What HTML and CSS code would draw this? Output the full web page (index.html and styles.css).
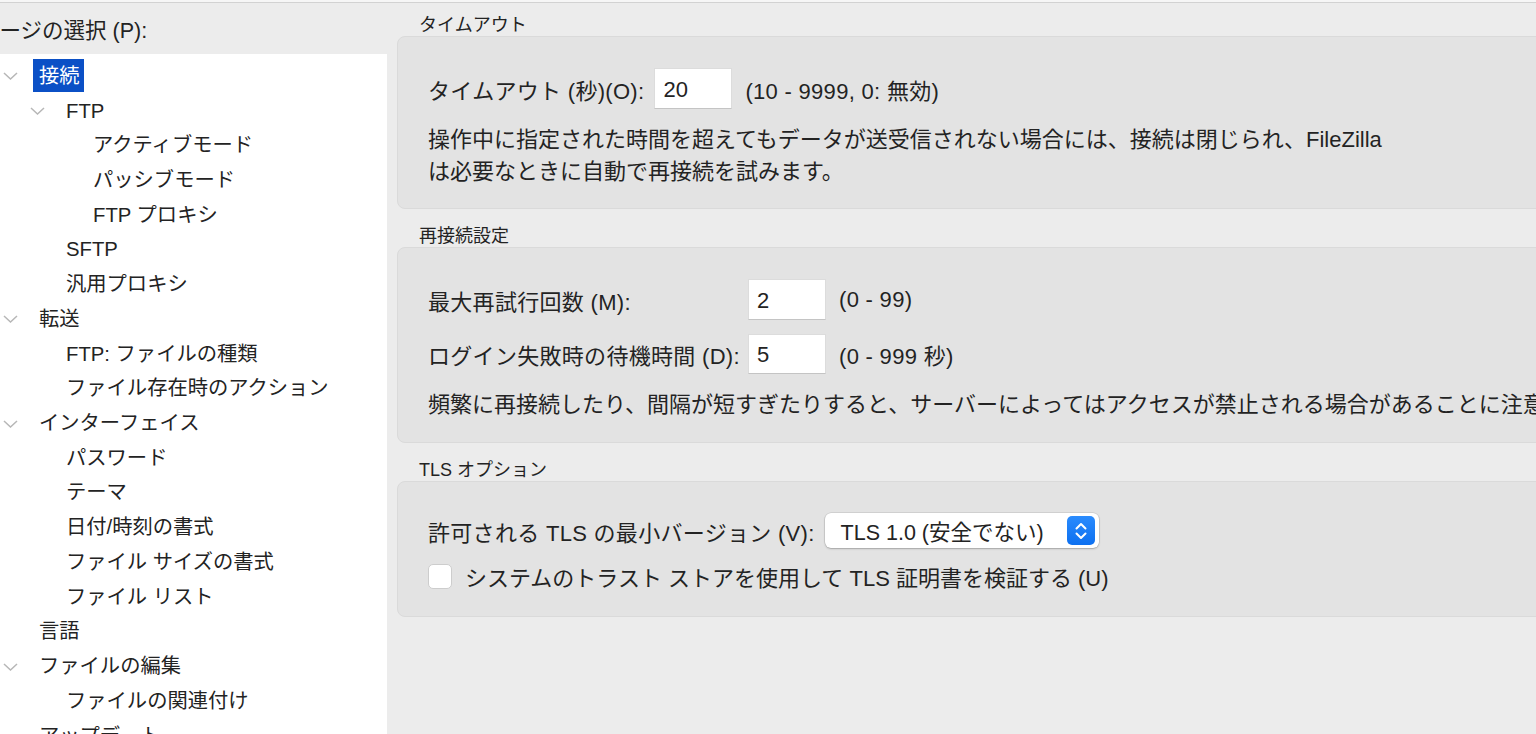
FILE: index.html
```html
<!DOCTYPE html>
<html lang="ja">
<head>
<meta charset="utf-8">
<title>設定</title>
<link rel="stylesheet" href="styles.css">
</head>
<body>
<div class="topline"></div>
<div class="window">
  <aside class="sidebar">
    <div class="side-title">ページの選択 (P):</div>
    <ul class="tree">
      <li class="row l0"><span class="chev"><svg width="15" height="8" viewBox="0 0 15 8"><path d="M1 1l6.5 6 6.5-6" fill="none" stroke="#b7b7b7" stroke-width="1.5"/></svg></span><span class="label sel">接続</span></li>
      <li class="row l1"><span class="chev"><svg width="15" height="8" viewBox="0 0 15 8"><path d="M1 1l6.5 6 6.5-6" fill="none" stroke="#b7b7b7" stroke-width="1.5"/></svg></span><span class="label">FTP</span></li>
      <li class="row l2"><span class="chev"></span><span class="label">アクティブモード</span></li>
      <li class="row l2"><span class="chev"></span><span class="label">パッシブモード</span></li>
      <li class="row l2"><span class="chev"></span><span class="label">FTP プロキシ</span></li>
      <li class="row l1"><span class="chev"></span><span class="label">SFTP</span></li>
      <li class="row l1"><span class="chev"></span><span class="label">汎用プロキシ</span></li>
      <li class="row l0"><span class="chev"><svg width="15" height="8" viewBox="0 0 15 8"><path d="M1 1l6.5 6 6.5-6" fill="none" stroke="#b7b7b7" stroke-width="1.5"/></svg></span><span class="label">転送</span></li>
      <li class="row l1"><span class="chev"></span><span class="label">FTP: ファイルの種類</span></li>
      <li class="row l1"><span class="chev"></span><span class="label">ファイル存在時のアクション</span></li>
      <li class="row l0"><span class="chev"><svg width="15" height="8" viewBox="0 0 15 8"><path d="M1 1l6.5 6 6.5-6" fill="none" stroke="#b7b7b7" stroke-width="1.5"/></svg></span><span class="label">インターフェイス</span></li>
      <li class="row l1"><span class="chev"></span><span class="label">パスワード</span></li>
      <li class="row l1"><span class="chev"></span><span class="label">テーマ</span></li>
      <li class="row l1"><span class="chev"></span><span class="label">日付/時刻の書式</span></li>
      <li class="row l1"><span class="chev"></span><span class="label">ファイル サイズの書式</span></li>
      <li class="row l1"><span class="chev"></span><span class="label">ファイル リスト</span></li>
      <li class="row l0"><span class="chev"></span><span class="label">言語</span></li>
      <li class="row l0"><span class="chev"><svg width="15" height="8" viewBox="0 0 15 8"><path d="M1 1l6.5 6 6.5-6" fill="none" stroke="#b7b7b7" stroke-width="1.5"/></svg></span><span class="label">ファイルの編集</span></li>
      <li class="row l1"><span class="chev"></span><span class="label">ファイルの関連付け</span></li>
      <li class="row l0"><span class="chev"></span><span class="label">アップデート</span></li>
    </ul>
  </aside>

  <main class="main">
    <section class="group">
      <div class="group-title">タイムアウト</div>
      <div class="box box-timeout">
        <div class="field">
          <span class="flabel">タイムアウト (秒)(O):</span>
          <span class="input">20</span>
          <span class="hint">(10 - 9999, 0: 無効)</span>
        </div>
        <p class="desc">操作中に指定された時間を超えてもデータが送受信されない場合には、接続は閉じられ、FileZilla<br>は必要なときに自動で再接続を試みます。</p>
      </div>
    </section>

    <section class="group">
      <div class="group-title">再接続設定</div>
      <div class="box box-reconnect">
        <div class="field">
          <span class="flabel wide">最大再試行回数 (M):</span>
          <span class="input">2</span>
          <span class="hint">(0 - 99)</span>
        </div>
        <div class="field field-2">
          <span class="flabel wide">ログイン失敗時の待機時間 (D):</span>
          <span class="input">5</span>
          <span class="hint">(0 - 999 秒)</span>
        </div>
        <p class="desc nowrap">頻繁に再接続したり、間隔が短すぎたりすると、サーバーによってはアクセスが禁止される場合があることに注意してください。</p>
      </div>
    </section>

    <section class="group">
      <div class="group-title">TLS オプション</div>
      <div class="box box-tls">
        <div class="field">
          <span class="flabel">許可される TLS の最小バージョン (V):</span>
          <span class="select">
            <span class="select-text">TLS 1.0 (安全でない)</span>
            <span class="stepper"><svg width="16" height="22" viewBox="0 0 16 22"><path d="M3.5 8.5L8 4l4.5 4.5M3.5 13.5L8 18l4.5-4.5" fill="none" stroke="#fff" stroke-width="2" stroke-linecap="round" stroke-linejoin="round"/></svg></span>
          </span>
        </div>
        <div class="check-row">
          <span class="checkbox"></span>
          <span class="check-label">システムのトラスト ストアを使用して TLS 証明書を検証する (U)</span>
        </div>
      </div>
    </section>
  </main>
</div>
</body>
</html>
```

FILE: styles.css
```css
* { box-sizing: border-box; }

html, body {
  margin: 0;
  padding: 0;
  width: 1536px;
  height: 734px;
  overflow: hidden;
  background: #ececec;
  color: #232323;
  font-family: "Liberation Sans", "Noto Sans CJK JP", "Noto Sans", sans-serif;
}

.topline {
  height: 3px;
  background: #f6f6f6;
  border-bottom: 1px solid #d2d2d2;
}

.window {
  display: flex;
  height: 731px;
}

/* ---------- sidebar ---------- */
.sidebar {
  width: 387px;
  flex: none;
  display: flex;
  flex-direction: column;
  overflow: hidden;
}

.side-title {
  height: 51px;
  padding-top: 12px;
  line-height: 32px;
  font-size: 21.5px;
  text-indent: -22px;
  white-space: nowrap;
}

.tree {
  flex: 1;
  margin: 0;
  padding: 4px 0 0 0;
  list-style: none;
  background: #ffffff;
  overflow: hidden;
}

.row {
  display: flex;
  align-items: center;
  height: 34.72px;
  font-size: 20.3px;
  white-space: nowrap;
}

.row.l1 { padding-left: 27px; }
.row.l2 { padding-left: 54px; }

.chev {
  width: 39px;
  flex: none;
  display: flex;
  align-items: center;
  padding-left: 3px;
  padding-top: 2px;
}

.chev svg { display: block; }

.label {
  line-height: 31px;
  padding-top: 2px;
}

.label.sel {
  background: #0b50c6;
  color: #ffffff;
  margin-left: -6px;
  padding: 2px 4px 0 6px;
}

/* ---------- main ---------- */
.main {
  flex: 1;
  min-width: 0;
  overflow: hidden;
  padding: 8px 0 0 10px;
}

.group {
  margin-right: -30px;
  margin-bottom: 13px;
}

.group-title {
  font-size: 18px;
  line-height: 22px;
  padding-top: 3px;
  padding-left: 22px;
}

.box {
  background: #e3e3e3;
  border: 1px solid #dadada;
  border-radius: 8px;
  padding: 31px 0 0 30px;
  font-size: 22px;
}

.box-timeout { height: 173px; }
.box-reconnect { height: 196px; }
.box-tls { height: 136px; }

.field {
  display: flex;
  align-items: center;
  white-space: nowrap;
}

.field-2 { margin-top: 14px; }

.flabel { margin-right: 10px; flex: none; letter-spacing: 0.3px; }
.flabel.wide { width: 320px; margin-right: 0; }

.input {
  display: inline-flex;
  align-items: center;
  flex: none;
  width: 78px;
  height: 41px;
  padding: 2px 0 0 8px;
  background: #ffffff;
  border: 1px solid #dcdcdc;
  border-bottom-color: #c4c4c4;
  font-size: 22px;
}

.field-2 .input { height: 40px; }

.hint { margin-left: 13px; letter-spacing: 0.3px; }

.desc {
  margin: 15px 0 0 0;
  line-height: 32px;
}

.desc.nowrap { white-space: nowrap; margin-top: 15px; }

.select {
  display: inline-flex;
  align-items: center;
  justify-content: space-between;
  flex: none;
  width: 274px;
  height: 35px;
  padding: 0 4px 0 16px;
  background: #ffffff;
  border-radius: 6px;
  box-shadow: 0 0 0 0.5px rgba(0, 0, 0, 0.14), 0 1px 2px rgba(0, 0, 0, 0.22);
}

.select-text { font-size: 21.5px; }

.stepper {
  width: 28px;
  height: 29px;
  border-radius: 5px;
  background: linear-gradient(#2a8bfd, #0d70f0);
  display: flex;
  align-items: center;
  justify-content: center;
}

.stepper svg { display: block; }

.check-row {
  display: flex;
  align-items: center;
  margin-top: 12px;
  height: 32px;
  white-space: nowrap;
}

.checkbox {
  width: 24px;
  height: 25px;
  background: #ffffff;
  border: 1px solid #cdcdcd;
  border-radius: 5px;
  margin-right: 13px;
  flex: none;
}
```
